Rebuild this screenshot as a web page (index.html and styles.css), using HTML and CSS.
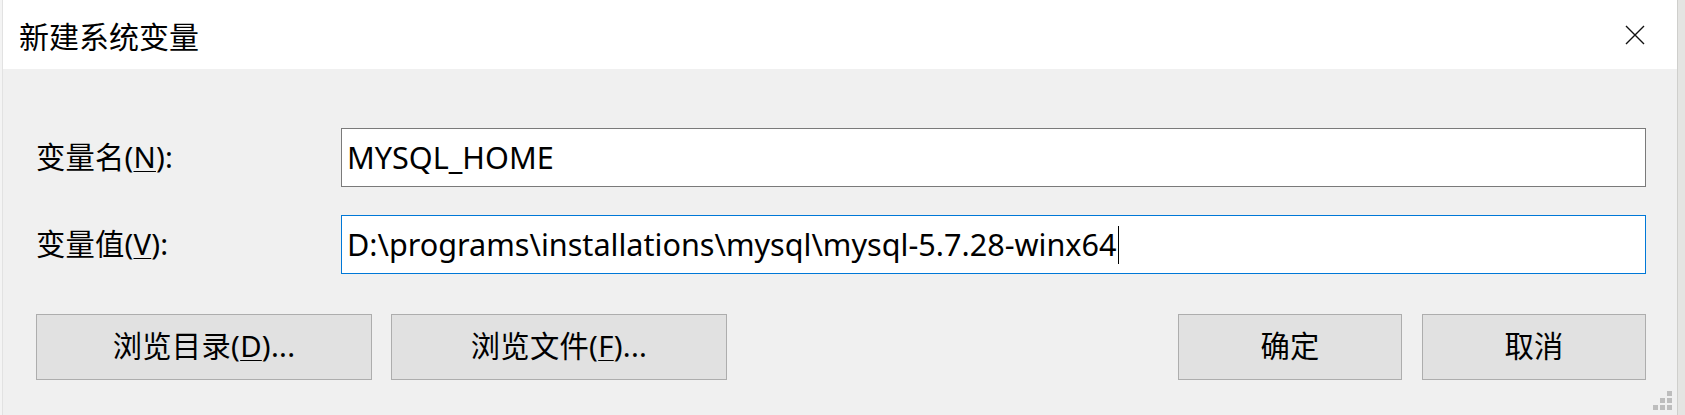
FILE: index.html
```html
<!DOCTYPE html>
<html lang="zh-CN">
<head>
<meta charset="utf-8">
<title>新建系统变量</title>
<link rel="stylesheet" href="styles.css">
</head>
<body>
<div class="edge-left"></div>
<div class="window">
  <div class="titlebar">
    <span class="title">新建系统变量</span>
    <span class="close" aria-label="关闭">
      <svg width="20" height="20" viewBox="0 0 20 20"><path d="M1 1 L19 19 M19 1 L1 19" stroke="#111" stroke-width="1.4" fill="none"/></svg>
    </span>
  </div>
  <div class="content">
    <div class="fields">
      <label class="label">变量名(<u>N</u>):</label>
      <div class="input">MYSQL_HOME</div>
      <label class="label">变量值(<u>V</u>):</label>
      <div class="input focused">D:\programs\installations\mysql\mysql-5.7.28-winx64<span class="caret"></span></div>
    </div>
    <div class="buttons">
      <div class="group">
        <div class="btn wide">浏览目录(<u>D</u>)...</div>
        <div class="btn wide">浏览文件(<u>F</u>)...</div>
      </div>
      <div class="group group-right">
        <div class="btn narrow">确定</div>
        <div class="btn narrow">取消</div>
      </div>
    </div>
    <div class="grip">
      <i class="g g3"></i>
      <i class="g g2"></i><i class="g g3"></i>
      <i class="g g1"></i><i class="g g2"></i><i class="g g3"></i>
    </div>
  </div>
</div>
<div class="edge-right"></div>
</body>
</html>
```

FILE: styles.css
```css
* { box-sizing: border-box; }
html, body { margin: 0; padding: 0; }
body {
  width: 1685px;
  height: 415px;
  overflow: hidden;
  display: flex;
  font-family: "Noto Sans", "Noto Sans CJK SC", sans-serif;
  color: #000;
  background: #f0f0f0;
}
.edge-left {
  width: 3px;
  flex: none;
  background: #f4f4f4;
  border-right: 1px solid #e2e2e2;
}
.edge-right {
  width: 8px;
  flex: none;
  background: #e4e4e2;
  border-left: 1px solid #cfcfcc;
}
.window {
  flex: 1;
  display: flex;
  flex-direction: column;
  min-width: 0;
}
.titlebar {
  height: 69px;
  flex: none;
  background: #fff;
  display: flex;
  align-items: center;
  justify-content: space-between;
  padding: 0 32px 0 16px;
}
.title {
  font-size: 30px;
  line-height: 1;
  font-family: "Noto Sans CJK SC", sans-serif;
}
.close { display: flex; width: 20px; height: 20px; }
.content {
  flex: 1;
  background: #f0f0f0;
  padding: 59px 31px 0 33px;
  position: relative;
}
.fields {
  display: grid;
  grid-template-columns: 305px 1fr;
  row-gap: 28px;
  align-items: center;
}
.label {
  font-size: 29.3px;
  line-height: 1;
  letter-spacing: 0.2px;
}
.label u { text-underline-offset: 3px; text-decoration-thickness: 1px; }
.input {
  height: 59px;
  background: #fff;
  border: 1px solid #7a7a7a;
  padding: 0 0 0 5px;
  font-size: 30.6px;
  line-height: 57px;
  white-space: nowrap;
  display: flex;
  align-items: center;
}
.input.focused { border-color: #0078d7; }
.caret {
  display: inline-block;
  width: 1px;
  height: 38px;
  background: #000;
  margin-left: 1px;
}
.buttons {
  margin-top: 40px;
  display: flex;
  justify-content: space-between;
}
.group { display: flex; gap: 19px; }
.group-right { gap: 20px; }
.btn {
  height: 66px;
  background: #e1e1e1;
  border: 1px solid #adadad;
  display: flex;
  align-items: center;
  justify-content: center;
  font-size: 29.3px;
  line-height: 1;
  letter-spacing: 0.3px;
}
.btn u { text-underline-offset: 3px; text-decoration-thickness: 1px; }
.wide { width: 336px; }
.narrow { width: 224px; }
.grip {
  position: absolute;
  right: 5px;
  bottom: 5px;
  width: 19px;
  height: 19px;
  display: grid;
  grid-template-columns: repeat(3, 5px);
  grid-template-rows: repeat(3, 5px);
  gap: 2px;
}
.g { display: block; width: 5px; height: 5px; background: #bdbdbd; }
.g1 { grid-column: 1; }
.g2 { grid-column: 2; }
.g3 { grid-column: 3; }
```
